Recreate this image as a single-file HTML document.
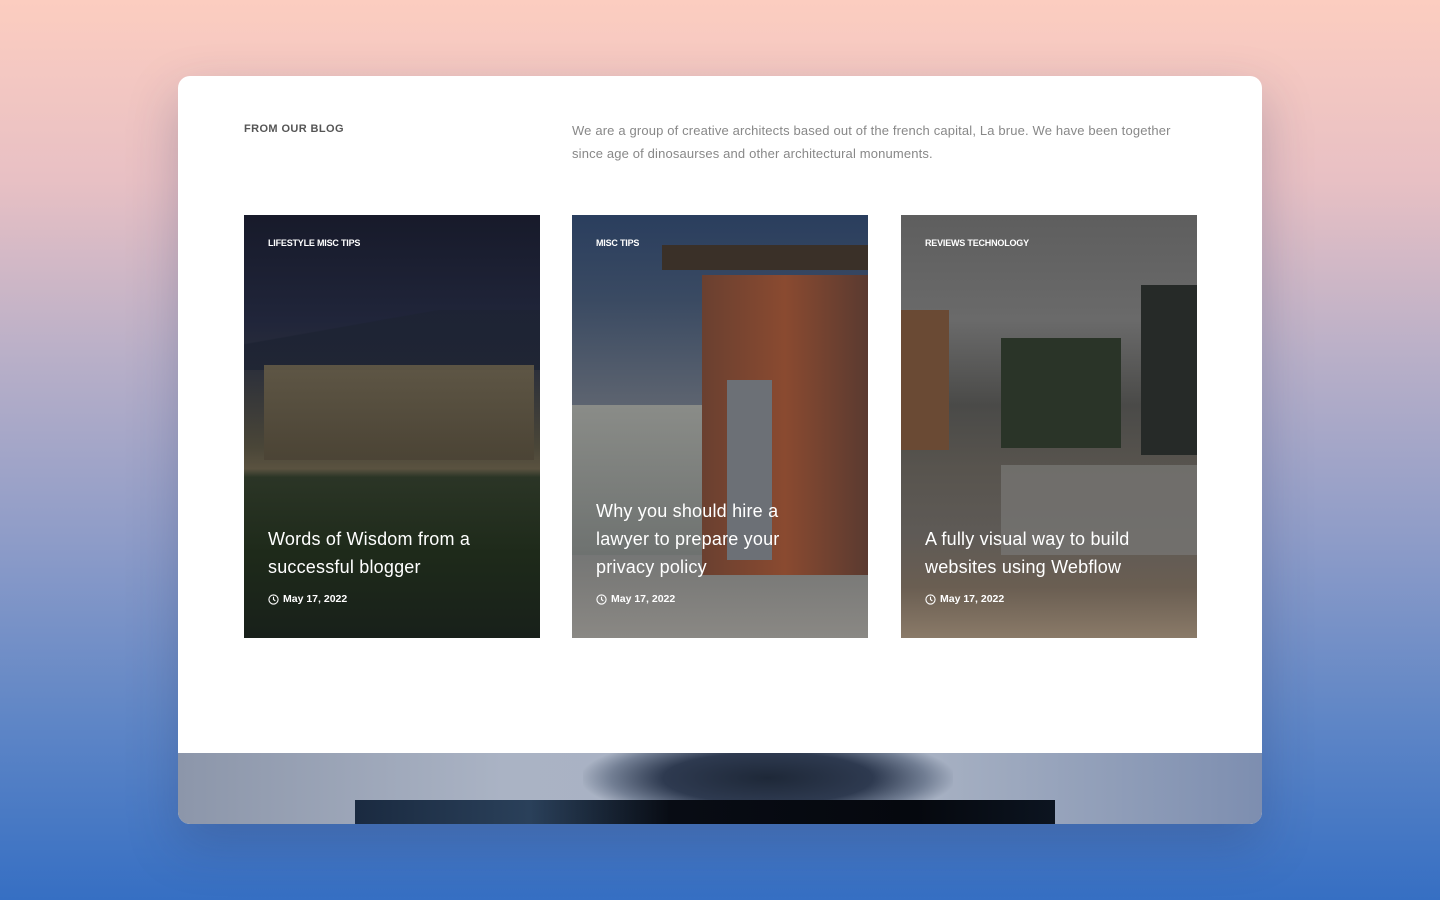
<!DOCTYPE html>
<html><head><meta charset="utf-8">
<style>
*{margin:0;padding:0;box-sizing:border-box}
html,body{width:1440px;height:900px;overflow:hidden}
body{background:linear-gradient(180deg,#fccdc0 0%,#e8c0c4 20%,#b8afc8 40%,#8e9cc8 60%,#5f86c6 80%,#366fc3 100%);font-family:"Liberation Sans",sans-serif;position:relative}
.panel{position:absolute;left:178px;top:76px;width:1084px;height:748px;background:#fff;border-radius:12px;overflow:hidden;box-shadow:0 20px 50px rgba(40,50,90,.25)}
.lbl{position:absolute;left:66px;top:47px;font-size:11px;font-weight:bold;color:#555;letter-spacing:.4px}
.desc{position:absolute;left:394px;top:43px;width:612px;font-size:13px;line-height:23px;color:#888;letter-spacing:.15px}
.card{position:absolute;top:139px;width:296px;height:423px;overflow:hidden}
.tags{position:absolute;left:24px;top:23px;font-size:9px;font-weight:bold;color:#fff;letter-spacing:-.2px}
.title{position:absolute;left:24px;font-size:18px;line-height:28px;color:#fff;width:250px;letter-spacing:.2px}
.date{position:absolute;left:24px;top:378px;font-size:10.5px;font-weight:bold;color:#fff;display:flex;align-items:center;gap:4px}
.strip{position:absolute;left:0;top:677px;width:1084px;height:71px;overflow:hidden;background:linear-gradient(90deg,#8c96aa,#aab3c4 30%,#a6b0c2 70%,#7d8eb0)}
</style></head><body>
<div class="panel">
<div class="lbl">FROM OUR BLOG</div>
<div class="desc">We are a group of creative architects based out of the french capital, La brue. We have been together since age of dinosaurses and other architectural monuments.</div>

<div class="card" style="left:66px;background:linear-gradient(180deg,#171a2a 0%,#20253a 25%,#2a2e3a 35%,#4a4638 55%,#5a5240 60%,#2b3526 62%,#1e2a1a 80%,#18201a 100%)">
<div style="position:absolute;left:0;top:95px;width:296px;height:60px;background:linear-gradient(170deg,transparent 30%,#1d2333 31%);opacity:.8"></div>
<div style="position:absolute;left:20px;top:150px;width:270px;height:95px;background:linear-gradient(180deg,#6b6048,#4a4234);opacity:.8"></div>
<div class="tags">LIFESTYLE MISC TIPS</div>
<div class="title" style="top:310px">Words of Wisdom from a successful blogger</div>
<div class="date"><svg width="11" height="11" viewBox="0 0 12 12"><circle cx="6" cy="6" r="5" fill="none" stroke="#fff" stroke-width="1.2"/><path d="M6 3v3l2 1.5" fill="none" stroke="#fff" stroke-width="1.2"/></svg>May 17, 2022</div>
</div>

<div class="card" style="left:394px;background:linear-gradient(180deg,#2a3e5e 0%,#3a4a62 20%,#5d6470 45%,#6a6e70 70%,#7a7a78 85%,#8a8884 100%)">
<div style="position:absolute;left:130px;top:60px;width:166px;height:300px;background:linear-gradient(90deg,#6a4030,#8a4a30 50%,#5a3a30)"></div>
<div style="position:absolute;left:155px;top:165px;width:45px;height:180px;background:#6c7076"></div>
<div style="position:absolute;left:90px;top:30px;width:206px;height:25px;background:#3a3028"></div>
<div style="position:absolute;left:0;top:190px;width:130px;height:150px;background:linear-gradient(180deg,#8a8c88,#6e7270)"></div>
<div class="tags">MISC TIPS</div>
<div class="title" style="top:282px;width:215px">Why you should hire a lawyer to prepare your privacy policy</div>
<div class="date"><svg width="11" height="11" viewBox="0 0 12 12"><circle cx="6" cy="6" r="5" fill="none" stroke="#fff" stroke-width="1.2"/><path d="M6 3v3l2 1.5" fill="none" stroke="#fff" stroke-width="1.2"/></svg>May 17, 2022</div>
</div>

<div class="card" style="left:723px;background:linear-gradient(180deg,#5e5e5e 0%,#6a6a6a 25%,#4a4a48 45%,#58544e 60%,#5e5a56 75%,#6a5e52 88%,#8a7a68 100%)">
<div style="position:absolute;left:0;top:95px;width:48px;height:140px;background:#6a4a34"></div>
<div style="position:absolute;left:100px;top:123px;width:120px;height:110px;background:#2a3428"></div>
<div style="position:absolute;left:240px;top:70px;width:56px;height:170px;background:#262a28"></div>
<div style="position:absolute;left:100px;top:250px;width:196px;height:90px;background:#767472;opacity:.8"></div>
<div class="tags">REVIEWS TECHNOLOGY</div>
<div class="title" style="top:310px">A fully visual way to build websites using Webflow</div>
<div class="date"><svg width="11" height="11" viewBox="0 0 12 12"><circle cx="6" cy="6" r="5" fill="none" stroke="#fff" stroke-width="1.2"/><path d="M6 3v3l2 1.5" fill="none" stroke="#fff" stroke-width="1.2"/></svg>May 17, 2022</div>
</div>

<div class="strip">
<div style="position:absolute;left:405px;top:-20px;width:370px;height:90px;background:radial-gradient(ellipse at 50% 50%,#1e2838 0%,#2e3a50 40%,rgba(60,75,100,.5) 60%,transparent 72%)"></div>
<div style="position:absolute;left:177px;top:47px;width:700px;height:24px;background:linear-gradient(90deg,#1a2a40,#2a405a 25%,#080c14 45%,#05080e 80%,#0c1420)"></div>
</div>
</div>
</body></html>
